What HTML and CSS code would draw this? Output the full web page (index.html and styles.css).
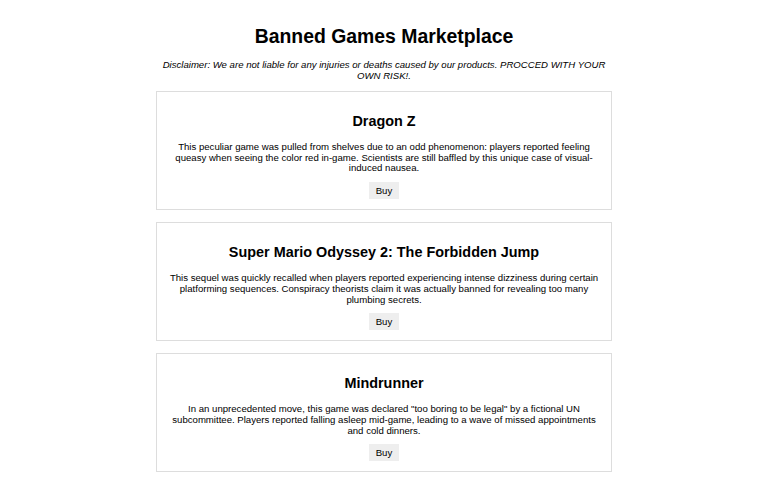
FILE: index.html
```html
<!DOCTYPE html>
<html>
<head>
<meta charset="utf-8">
<link rel="stylesheet" href="styles.css">
</head>
<body>
<div class="page">
  <h1 class="title">Banned Games Marketplace</h1>
  <p class="disclaimer">Disclaimer: We are not liable for any injuries or deaths caused by our products. PROCCED WITH YOUR OWN RISK!.</p>
  <div class="card">
    <h2 class="card-title">Dragon Z</h2>
    <p class="card-text">This peculiar game was pulled from shelves due to an odd phenomenon: players reported feeling queasy when seeing the color red in-game. Scientists are still baffled by this unique case of visual-induced nausea.</p>
    <button class="buy">Buy</button>
  </div>
  <div class="card">
    <h2 class="card-title">Super Mario Odyssey 2: The Forbidden Jump</h2>
    <p class="card-text">This sequel was quickly recalled when players reported experiencing intense dizziness during certain platforming sequences. Conspiracy theorists claim it was actually banned for revealing too many plumbing secrets.</p>
    <button class="buy">Buy</button>
  </div>
  <div class="card">
    <h2 class="card-title">Mindrunner</h2>
    <p class="card-text">In an unprecedented move, this game was declared "too boring to be legal" by a fictional UN subcommittee. Players reported falling asleep mid-game, leading to a wave of missed appointments and cold dinners.</p>
    <button class="buy">Buy</button>
  </div>
</div>
</body>
</html>
```
FILE: styles.css
```css
html, body {
  margin: 0;
  padding: 0;
  background: #fff;
}
body {
  font-family: "Liberation Sans", Arial, sans-serif;
  color: #000;
}
.page {
  width: 456px;
  margin: 0 auto;
  padding-top: 13px;
  display: flex;
  flex-direction: column;
  text-align: center;
}
.title {
  font-size: 19.4px;
  font-weight: bold;
  margin: 12px 0 0;
  line-height: 22px;
}
.disclaimer {
  font-size: 9.6px;
  font-style: italic;
  line-height: 11px;
  margin: 12px 0 10px;
}
.card {
  border: 1px solid #ddd;
  padding: 12px 9px 10px;
  margin-bottom: 12px;
  display: flex;
  flex-direction: column;
  align-items: center;
}
.card-title {
  font-size: 14.4px;
  font-weight: bold;
  margin: 9px 0 12px;
  line-height: 17px;
}
.card-text {
  font-size: 9.6px;
  line-height: 10.7px;
  margin: 0 0 8px;
}
.buy {
  font-family: "Liberation Sans", Arial, sans-serif;
  font-size: 9.6px;
  background: #eee;
  border: none;
  padding: 3px 6.5px;
  line-height: 11px;
  color: #000;
}
```
